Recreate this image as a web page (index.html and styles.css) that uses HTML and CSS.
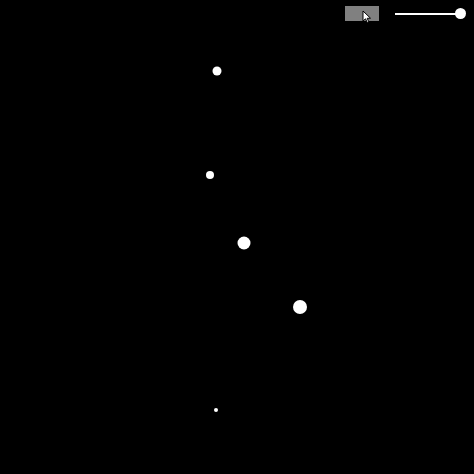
FILE: index.html
```html
<!DOCTYPE html>
<html>
<head>
<meta charset="utf-8">
<link rel="stylesheet" href="styles.css">
</head>
<body>
<div class="stage">
  <div class="controls">
    <div class="btn">
      <svg class="cursor" width="10" height="14" viewBox="0 0 10 14"><path d="M1 1 L1 11 L3.5 8.8 L5.5 13 L7 12.3 L5.2 8.3 L8.5 8.2 Z" fill="#fff" stroke="#000" stroke-width="1"/></svg>
    </div>
    <div class="slider"><div class="track"></div><div class="thumb"></div></div>
  </div>
  <div class="dot" style="left:217px;top:71px;width:9px;height:9px"></div>
  <div class="dot" style="left:210px;top:175px;width:8px;height:8px"></div>
  <div class="dot" style="left:244px;top:243px;width:13px;height:13px"></div>
  <div class="dot" style="left:300px;top:307px;width:14px;height:14px"></div>
  <div class="dot" style="left:216px;top:410px;width:4px;height:4px"></div>
</div>
</body>
</html>
```
FILE: styles.css
```css
html, body { margin: 0; padding: 0; background: #000; }
.stage { position: relative; width: 474px; height: 474px; overflow: hidden; background: #000; }
.controls { display: flex; justify-content: flex-end; align-items: center; padding: 6px 8px 0 0; gap: 16px; }
.btn { position: relative; width: 34px; height: 15px; background: #808080; }
.cursor { position: absolute; left: 17px; top: 4px; }
.slider { position: relative; width: 71px; height: 15px; display: flex; align-items: center; }
.track { width: 66px; height: 2px; background: #fff; }
.thumb { position: absolute; right: 0; top: 2px; width: 11px; height: 11px; border-radius: 50%; background: #fff; }
.dot { position: absolute; background: #fff; border-radius: 50%; transform: translate(-50%, -50%); }
```
